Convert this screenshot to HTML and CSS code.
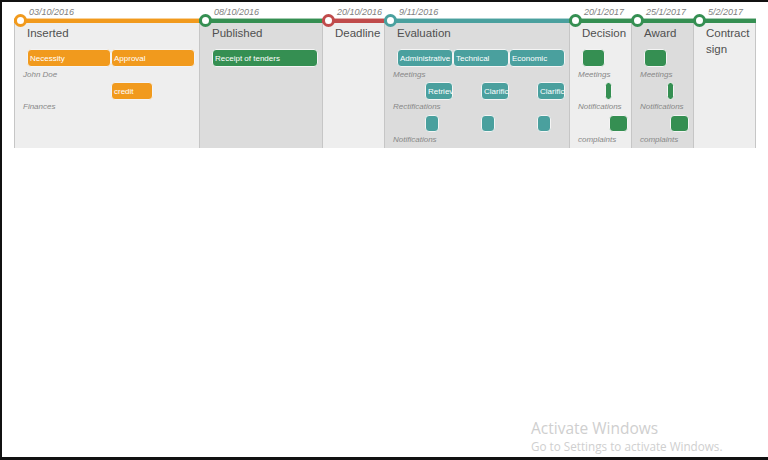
FILE: index.html
```html
<!DOCTYPE html>
<html lang="en">
<head>
<meta charset="utf-8">
<title>Process timeline</title>
<link rel="stylesheet" href="styles.css">
</head>
<body>
<main class="timeline">
  <section class="phase span3 orange">
    <div class="head"><span class="date">03/10/2016</span><div class="line"></div><i class="dot"></i></div>
    <div class="panel light">
      <h2>Inserted</h2>
      <div class="track"><div class="bars"><b class="bar w84">Necessity</b><b class="bar w84">Approval</b></div><p>John Doe</p></div>
      <div class="track"><div class="bars"><b class="bar w42 off84">credit</b></div><p>Finances</p></div>
    </div>
  </section>
  <section class="phase span2 green">
    <div class="head"><span class="date">08/10/2016</span><div class="line"></div><i class="dot"></i></div>
    <div class="panel dark">
      <h2>Published</h2>
      <div class="track"><div class="bars"><b class="bar w106">Receipt of tenders</b></div></div>
    </div>
  </section>
  <section class="phase span1 red">
    <div class="head"><span class="date">20/10/2016</span><div class="line"></div><i class="dot"></i></div>
    <div class="panel light">
      <h2>Deadline</h2>
    </div>
  </section>
  <section class="phase span3 teal">
    <div class="head"><span class="date">9/11/2016</span><div class="line"></div><i class="dot"></i></div>
    <div class="panel dark">
      <h2>Evaluation</h2>
      <div class="track"><div class="bars"><b class="bar w56">Administrative</b><b class="bar w56">Technical</b><b class="bar w56">Economic</b></div><p>Meetings</p></div>
      <div class="track"><div class="bars"><b class="bar w28 off28">Retrieval</b><b class="bar w28 off28">Clarification</b><b class="bar w28 off28">Clarification</b></div><p>Rectifications</p></div>
      <div class="track"><div class="bars"><b class="bar short w14 off28"></b><b class="bar short w14 off42"></b><b class="bar short w14 off42"></b></div><p>Notifications</p></div>
    </div>
  </section>
  <section class="phase span1 green">
    <div class="head"><span class="date">20/1/2017</span><div class="line"></div><i class="dot"></i></div>
    <div class="panel light">
      <h2>Decision</h2>
      <div class="track"><div class="bars"><b class="bar w23"></b></div><p>Meetings</p></div>
      <div class="track"><div class="bars"><b class="bar w7 off22"></b></div><p>Notifications</p></div>
      <div class="track"><div class="bars"><b class="bar short w19 off27"></b></div><p>complaints</p></div>
    </div>
  </section>
  <section class="phase span1 green">
    <div class="head"><span class="date">25/1/2017</span><div class="line"></div><i class="dot"></i></div>
    <div class="panel dark">
      <h2>Award</h2>
      <div class="track"><div class="bars"><b class="bar w23"></b></div><p>Meetings</p></div>
      <div class="track"><div class="bars"><b class="bar w7 off23"></b></div><p>Notifications</p></div>
      <div class="track"><div class="bars"><b class="bar short w19 off26"></b></div><p>complaints</p></div>
    </div>
  </section>
  <section class="phase span1 last green">
    <div class="head"><span class="date">5/2/2017</span><div class="line"></div><i class="dot"></i></div>
    <div class="panel light">
      <h2>Contract sign</h2>
    </div>
  </section>
</main>
<aside class="activate">
  <div class="a1">Activate Windows</div>
  <div class="a2">Go to Settings to activate Windows.</div>
</aside>
</body>
</html>
```
FILE: styles.css
```css
* { box-sizing: border-box; }
html, body { height: 100%; margin: 0; }
body {
  border: solid #111;
  border-width: 2px 0 3px 2px;
  background: #fff;
  font-family: "Liberation Sans", Arial, sans-serif;
  position: relative;
  overflow: hidden;
}
.timeline { display: flex; padding-left: 12px; }
.phase { flex: none; }
.span1 { width: 62px; }
.span2 { width: 123px; }
.span3 { width: 185px; }
.last { width: 62.5px; }
.panel { height: 128px; border-left: 1px solid #c6c6c6; }
.last .panel { border-right: 1px solid #c6c6c6; }
.light { background: #eeeeee; }
.dark { background: #dcdcdc; }
.head { position: relative; height: 18px; }
.date {
  position: absolute; left: 15px; top: 5px;
  font: italic 9px/11px "Liberation Sans", Arial, sans-serif;
  color: #808080;
  white-space: nowrap;
}
.line {
  position: absolute; left: 0; right: 0; top: 16px; height: 5px;
  border-top: 1px solid rgba(255, 255, 255, .55);
}
.dot {
  position: absolute; left: 0; top: 12px; z-index: 1;
  width: 13px; height: 13px; border-radius: 50%;
  background: #fff; border: 3px solid;
}
.orange .line, .orange .bar { background-color: #f19a1d; }
.orange .dot { border-color: #f19a1d; }
.green .line, .green .bar { background-color: #358f52; }
.green .dot { border-color: #358f52; }
.red .line { background-color: #c04b4b; }
.red .dot { border-color: #c04b4b; }
.teal .line, .teal .bar { background-color: #4aa09e; }
.teal .dot { border-color: #4aa09e; }
h2 {
  margin: 0; padding: 5px 0 0 12px;
  height: 29px;
  font-weight: normal; font-size: 11.5px; line-height: 16px;
  color: #505050;
}
.track { height: 32.5px; padding-left: 12px; }
.track p {
  margin: 2.5px 0 0 -4px;
  font: italic 8px/10px "Liberation Sans", Arial, sans-serif;
  color: #888;
  white-space: nowrap;
}
.bars { display: flex; height: 18px; }
.bar {
  display: block; flex: none; height: 18px;
  border: 1px solid #f4f4f4; border-radius: 4px;
  color: #fff; font-weight: normal;
  font-size: 8px; line-height: 17px; padding-left: 2px;
  overflow: hidden; white-space: nowrap;
}
.short { height: 17px; margin-top: 1px; }
.w7 { width: 7px; }
.w14 { width: 14px; }
.w19 { width: 19px; }
.w23 { width: 23px; }
.w28 { width: 28px; }
.w42 { width: 42px; }
.w56 { width: 56px; }
.w84 { width: 84px; }
.w106 { width: 106px; }
.off22 { margin-left: 22.5px; }
.off23 { margin-left: 23px; }
.off26 { margin-left: 26px; }
.off27 { margin-left: 27px; }
.off28 { margin-left: 28px; }
.off42 { margin-left: 42px; }
.off84 { margin-left: 84px; }
.activate {
  position: absolute; left: 529px; top: 416px;
  font-family: "Open Sans", sans-serif; color: #cfcfcf;
}
.a1 { font-size: 15.5px; line-height: 20px; }
.a2 { font-size: 11.7px; line-height: 17px; }
```
